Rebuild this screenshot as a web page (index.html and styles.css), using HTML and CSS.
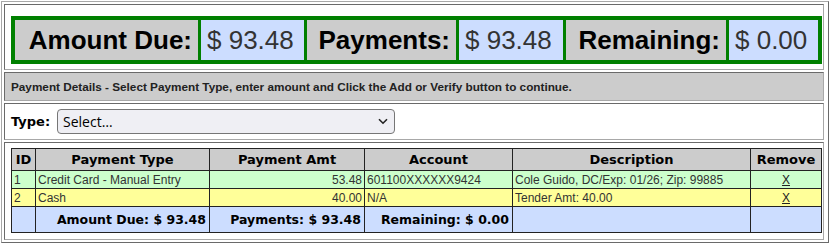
FILE: index.html
```html
<!DOCTYPE html>
<html>
<head>
<meta charset="utf-8">
<link rel="stylesheet" href="styles.css">
</head>
<body>
<div class="frame">
  <div class="cell totals-cell">
    <div class="totals">
      <div class="t-label">Amount Due:</div>
      <div class="t-value">$ 93.48</div>
      <div class="t-label">Payments:</div>
      <div class="t-value">$ 93.48</div>
      <div class="t-label">Remaining:</div>
      <div class="t-value">$ 0.00</div>
    </div>
  </div>
  <div class="cell details-head">Payment Details - Select Payment Type, enter amount and Click the Add or Verify button to continue.</div>
  <div class="cell type-row">
    <span class="type-label">Type:</span>
    <div class="select">
      <span class="select-text">Select…</span>
      <svg class="chev" width="10" height="7" viewBox="0 0 10 7"><path d="M1 1.2 L5 5.2 L9 1.2" fill="none" stroke="#222" stroke-width="1.6"/></svg>
    </div>
  </div>
  <div class="cell grid-cell">
    <table class="payments">
      <colgroup>
        <col class="c-id"><col class="c-type"><col class="c-amt"><col class="c-acc"><col class="c-desc"><col class="c-rem">
      </colgroup>
      <thead>
        <tr><th>ID</th><th>Payment Type</th><th>Payment Amt</th><th>Account</th><th>Description</th><th>Remove</th></tr>
      </thead>
      <tbody>
        <tr class="row-green"><td>1</td><td>Credit Card - Manual Entry</td><td class="num">53.48</td><td>601100XXXXXX9424</td><td>Cole Guido, DC/Exp: 01/26; Zip: 99885</td><td class="rem"><a href="#">X</a></td></tr>
        <tr class="row-yellow"><td>2</td><td>Cash</td><td class="num">40.00</td><td>N/A</td><td>Tender Amt: 40.00</td><td class="rem"><a href="#">X</a></td></tr>
      </tbody>
      <tfoot>
        <tr><td></td><td class="ft">Amount Due: $ 93.48</td><td class="ft">Payments: $ 93.48</td><td class="ft">Remaining: $ 0.00</td><td></td><td></td></tr>
      </tfoot>
    </table>
  </div>
</div>
</body>
</html>
```
FILE: styles.css
```css
html, body {
  margin: 0;
  padding: 0;
  background: #fff;
  font-family: "Liberation Sans", Arial, sans-serif;
}

.frame {
  box-sizing: border-box;
  margin: 1px 0 0 1px;
  width: 828px;
  height: 242px;
  border: 1px solid;
  border-color: #a8a8a8 #6a6a6a #6a6a6a #a8a8a8;
  padding: 2px 4px 2px 2px;
  display: flex;
  flex-direction: column;
  gap: 2px;
}

.cell {
  box-sizing: border-box;
  border: 1px solid;
  border-color: #6a6a6a #a8a8a8 #a8a8a8 #6a6a6a;
}

/* totals */
.totals-cell {
  height: 66px;
  padding: 11px 1px 0 6px;
}

.totals {
  box-sizing: border-box;
  height: 48px;
  border: 4px solid #008000;
  background: #008000;
  display: grid;
  grid-template-columns: 183px 103px 149px 104px 160px 89px;
  column-gap: 3px;
}

.t-label, .t-value {
  display: flex;
  align-items: center;
  font-size: 26px;
}

.t-label {
  background: #cccccc;
  justify-content: flex-end;
  padding-right: 6px;
  font-weight: bold;
  color: #000;
}

.t-value {
  background: #ccddff;
  padding-left: 6px;
  color: #333;
}

/* details header */
.details-head {
  height: 29px;
  background: #cccccc;
  display: flex;
  align-items: center;
  padding-left: 6px;
  font-size: 11.75px;
  font-weight: bold;
  color: #222;
}

/* type row */
.type-row {
  height: 37px;
  display: flex;
  align-items: center;
  padding-left: 6px;
}

.type-label {
  font-family: "DejaVu Sans", Verdana, sans-serif;
  font-weight: bold;
  font-size: 13px;
  color: #000;
  width: 46px;
}

.select {
  box-sizing: border-box;
  width: 338px;
  height: 25px;
  border: 1px solid #767676;
  border-radius: 4px;
  background: #efeff4;
  display: flex;
  align-items: center;
  justify-content: space-between;
  padding: 0 6px 0 5px;
}

.select-text {
  font-family: "Open Sans", "Noto Sans", sans-serif;
  font-size: 14px;
  color: #000;
}

/* payments table */
.grid-cell {
  flex: 1;
  padding: 5px 1px 0 6px;
}

.payments {
  border-collapse: collapse;
  table-layout: fixed;
  width: 811px;
  border: 1px solid #222;
}

.c-id { width: 24px; }
.c-type { width: 174px; }
.c-amt { width: 155px; }
.c-acc { width: 148px; }
.c-desc { width: 238px; }
.c-rem { width: 71px; }

.payments th, .payments td {
  border: 1px solid #222;
  padding: 0 3px;
  overflow: hidden;
  white-space: nowrap;
}

.payments th {
  height: 21px;
  background: #cccccc;
  font-family: "DejaVu Sans", Verdana, sans-serif;
  font-size: 13px;
  font-weight: bold;
  color: #000;
  text-align: center;
}

.payments tbody td {
  height: 17px;
  font-size: 12px;
  color: #333;
  padding: 0 2px;
}

.row-green td { background: #ccffcc; }
.row-yellow td { background: #ffff99; }

.payments td.num { text-align: right; }
.payments td.rem { text-align: center; }
.payments td.rem a { color: #222; text-decoration: underline; }

.payments tfoot td {
  height: 25px;
  background: #ccddff;
}

.payments td.ft {
  font-family: "DejaVu Sans", Verdana, sans-serif;
  font-size: 12.5px;
  font-weight: bold;
  color: #000;
  text-align: right;
  padding-right: 3px;
}
```
